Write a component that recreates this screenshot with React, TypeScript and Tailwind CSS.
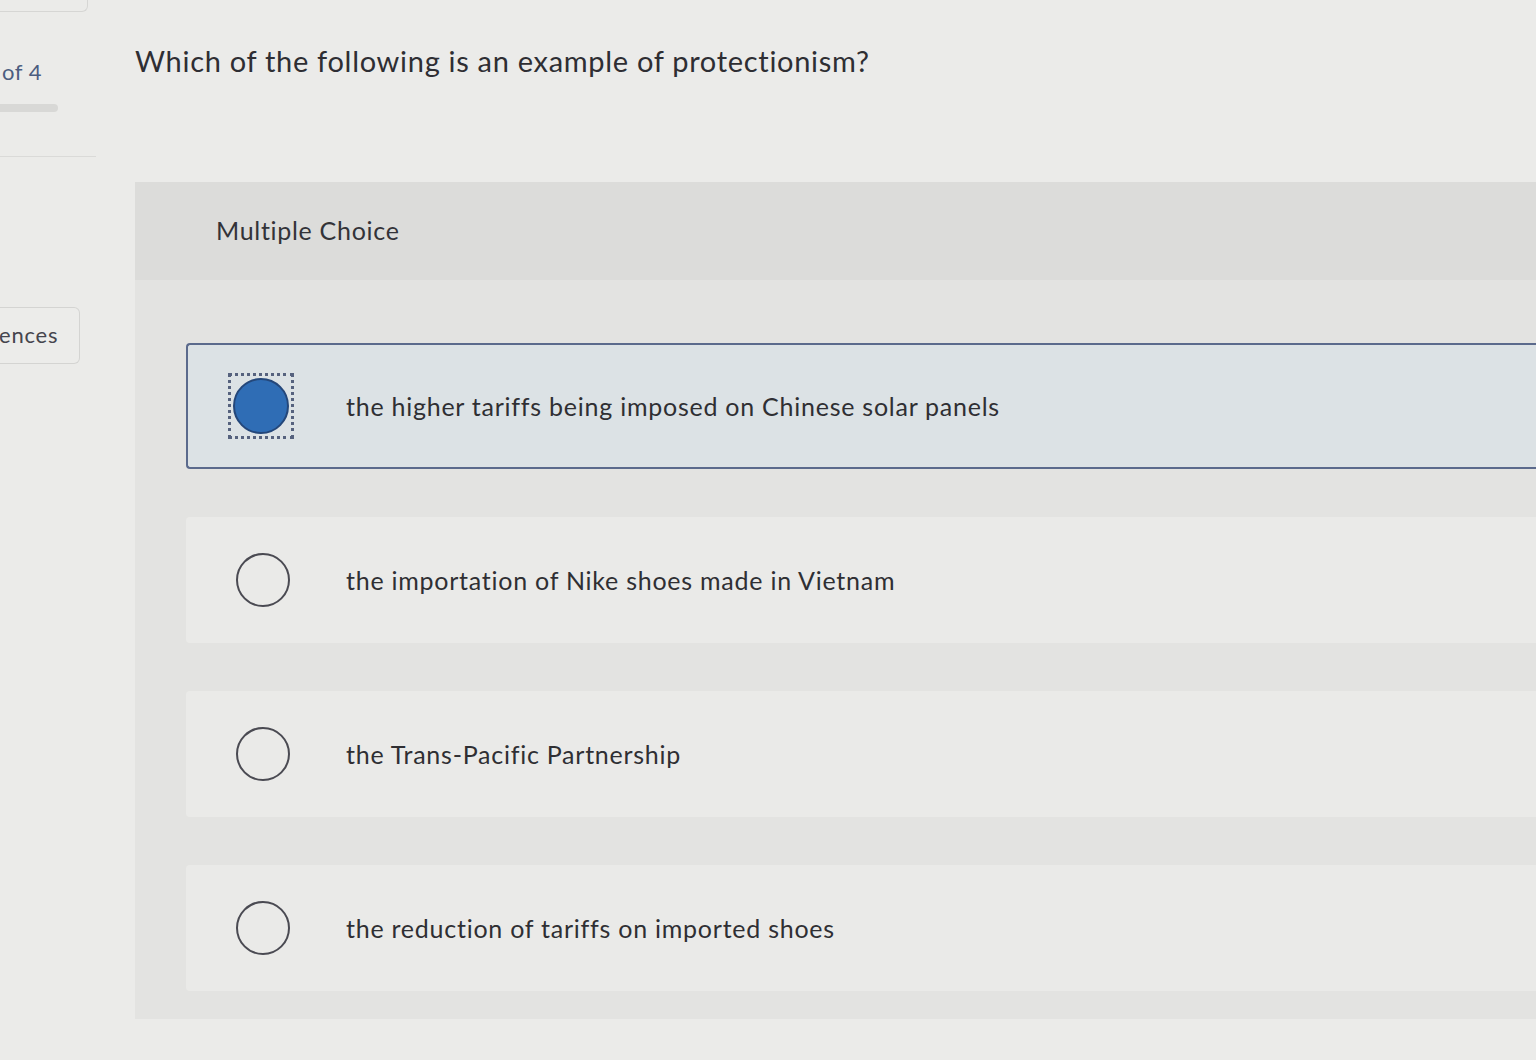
import { useState } from 'react';

const OPTIONS = [
  'the higher tariffs being imposed on Chinese solar panels',
  'the importation of Nike shoes made in Vietnam',
  'the Trans-Pacific Partnership',
  'the reduction of tariffs on imported shoes',
];

export default function App() {
  const [selected, setSelected] = useState(0);

  return (
    <div
      className="flex w-[1536px] h-[1060px] overflow-hidden bg-[#ebebe9] text-[#2f2f33]"
      style={{ fontFamily: 'Lato, "Open Sans", sans-serif' }}
    >
      {/* Sidebar (cut off at the left edge) */}
      <aside className="w-[96px] shrink-0 flex flex-col">
        <div className="w-[88px] h-[12px] border-b border-r border-[#d6d6d4] rounded-br-md" />
        <div className="mt-[46px] text-[22px] leading-[28px] tracking-[0.5px] text-[#4b5d80] pl-[2px]">of 4</div>
        <div className="mt-[18px] w-[58px] h-[8px] rounded-r-full bg-[#d8d8d6]" />
        <div className="mt-[44px] h-px bg-[#dadad8]" />
        <div className="mt-[150px] w-[81px] h-[57px] -ml-[1px] flex items-center pb-[3px] border border-l-0 border-[#d4d4d2] rounded-r-md bg-[#ececea] text-[22px] tracking-[0.8px] text-[#45454d]">
          ences
        </div>
      </aside>

      {/* Main */}
      <main className="flex-1 pl-[39px] pt-[42px]">
        <h1 className="text-[29px] leading-[38px] tracking-[0.7px] text-[#2e2e33]">
          Which of the following is an example of protectionism?
        </h1>

        <section className="mt-[102px] bg-[#e3e3e1] pb-[28px]">
          <div className="h-[98px] bg-[#dcdcda] flex items-center pl-[81px] text-[25px] tracking-[0.7px] text-[#333338]">
            Multiple Choice
          </div>

          <div className="pl-[51px] pt-[63px] flex flex-col gap-[48px]">
            {OPTIONS.map((text, i) => {
              const isSel = selected === i;
              return (
                <button
                  key={i}
                  onClick={() => setSelected(i)}
                  className={`h-[126px] flex items-center text-left rounded-l-sm ${
                    isSel
                      ? 'bg-[#dce2e5] border-2 border-r-0 border-[#5b6a8c] pl-[40px]'
                      : 'bg-[#eaeae8] pl-[42px]'
                  }`}
                >
                  {isSel ? (
                    <span className="w-[66px] h-[66px] flex items-center justify-center border-[3px] border-dotted border-[#56627e]">
                      <span className="w-[56px] h-[56px] rounded-full bg-[#2f6db5] border-2 border-[#24477a]" />
                    </span>
                  ) : (
                    <span className="ml-[8px] w-[54px] h-[54px] rounded-full border-2 border-[#4a4a52]" />
                  )}
                  <span
                    className={`${isSel ? 'ml-[52px]' : 'ml-[56px]'} text-[25px] leading-[32px] tracking-[0.75px] text-[#2f2f33]`}
                  >
                    {text}
                  </span>
                </button>
              );
            })}
          </div>
        </section>
      </main>
    </div>
  );
}
